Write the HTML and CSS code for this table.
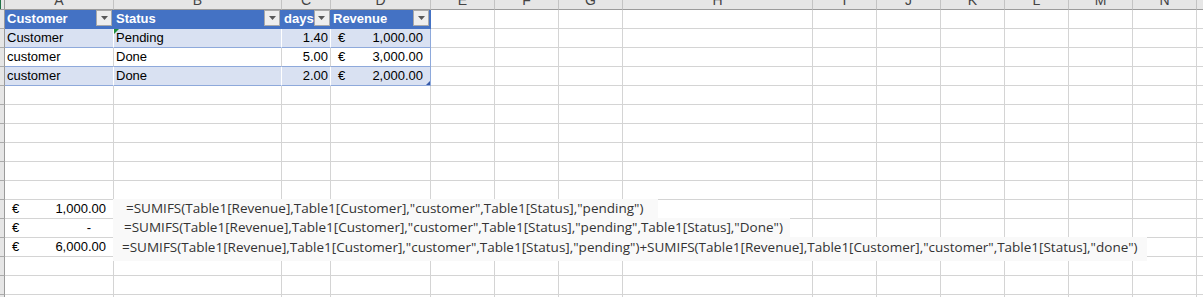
FILE: index.html
```html
<!DOCTYPE html>
<html lang="en">
<head>
<meta charset="utf-8">
<title>Sheet1</title>
<link rel="stylesheet" href="styles.css">
</head>
<body>
<div class="sheet">
  <div class="row cols">
    <div class="corner"></div><div>A</div><div>B</div><div>C</div><div>D</div><div>E</div><div>F</div><div>G</div><div>H</div><div>I</div><div>J</div><div>K</div><div>L</div><div>M</div><div>N</div><div>O</div>
  </div>
  <div class="row">
    <div class="rh"></div>
    <div class="th"><span>Customer</span><span class="fbtn"><svg width="7" height="4" viewBox="0 0 7 4"><path d="M0 0H7L3.5 4Z" fill="#595959"/></svg></span></div>
    <div class="th"><span>Status</span><span class="fbtn"><svg width="7" height="4" viewBox="0 0 7 4"><path d="M0 0H7L3.5 4Z" fill="#595959"/></svg></span></div>
    <div class="th"><span>days</span><span class="fbtn"><svg width="7" height="4" viewBox="0 0 7 4"><path d="M0 0H7L3.5 4Z" fill="#595959"/></svg></span></div>
    <div class="th"><span>Revenue</span><span class="fbtn"><svg width="7" height="4" viewBox="0 0 7 4"><path d="M0 0H7L3.5 4Z" fill="#595959"/></svg></span></div>
    <div></div><div></div><div></div><div></div><div></div><div></div><div></div><div></div><div></div><div></div><div></div>
  </div>
  <div class="row band">
    <div class="rh"></div>
    <div class="t">Customer</div>
    <div class="t err">Pending</div>
    <div class="t num">1.40</div>
    <div class="t acct last"><span>€</span><span>1,000.00</span></div>
    <div></div><div></div><div></div><div></div><div></div><div></div><div></div><div></div><div></div><div></div><div></div>
  </div>
  <div class="row plain">
    <div class="rh"></div>
    <div class="t">customer</div>
    <div class="t">Done</div>
    <div class="t num">5.00</div>
    <div class="t acct last"><span>€</span><span>3,000.00</span></div>
    <div></div><div></div><div></div><div></div><div></div><div></div><div></div><div></div><div></div><div></div><div></div>
  </div>
  <div class="row band">
    <div class="rh"></div>
    <div class="t">customer</div>
    <div class="t">Done</div>
    <div class="t num">2.00</div>
    <div class="t acct last handle"><span>€</span><span>2,000.00</span></div>
    <div></div><div></div><div></div><div></div><div></div><div></div><div></div><div></div><div></div><div></div><div></div>
  </div>
  <div class="row"><div class="rh"></div><div></div><div></div><div></div><div></div><div></div><div></div><div></div><div></div><div></div><div></div><div></div><div></div><div></div><div></div><div></div></div>
  <div class="row"><div class="rh"></div><div></div><div></div><div></div><div></div><div></div><div></div><div></div><div></div><div></div><div></div><div></div><div></div><div></div><div></div><div></div></div>
  <div class="row"><div class="rh"></div><div></div><div></div><div></div><div></div><div></div><div></div><div></div><div></div><div></div><div></div><div></div><div></div><div></div><div></div><div></div></div>
  <div class="row"><div class="rh"></div><div></div><div></div><div></div><div></div><div></div><div></div><div></div><div></div><div></div><div></div><div></div><div></div><div></div><div></div><div></div></div>
  <div class="row"><div class="rh"></div><div></div><div></div><div></div><div></div><div></div><div></div><div></div><div></div><div></div><div></div><div></div><div></div><div></div><div></div><div></div></div>
  <div class="row"><div class="rh"></div><div></div><div></div><div></div><div></div><div></div><div></div><div></div><div></div><div></div><div></div><div></div><div></div><div></div><div></div><div></div></div>
  <div class="row">
    <div class="rh"></div>
    <div class="acct"><span>€</span><span>1,000.00</span></div>
    <div></div><div></div><div></div><div></div><div></div><div></div><div></div><div></div><div></div><div></div><div></div><div></div><div></div><div></div>
  </div>
  <div class="row">
    <div class="rh"></div>
    <div class="acct"><span>€</span><span class="dash">-</span></div>
    <div></div><div></div><div></div><div></div><div></div><div></div><div></div><div></div><div></div><div></div><div></div><div></div><div></div><div></div>
  </div>
  <div class="row">
    <div class="rh"></div>
    <div class="acct"><span>€</span><span>6,000.00</span></div>
    <div></div><div></div><div></div><div></div><div></div><div></div><div></div><div></div><div></div><div></div><div></div><div></div><div></div><div></div>
  </div>
  <div class="row"><div class="rh"></div><div></div><div></div><div></div><div></div><div></div><div></div><div></div><div></div><div></div><div></div><div></div><div></div><div></div><div></div><div></div></div>
  <div class="row"><div class="rh"></div><div></div><div></div><div></div><div></div><div></div><div></div><div></div><div></div><div></div><div></div><div></div><div></div><div></div><div></div><div></div></div>
  <div class="row"><div class="rh"></div><div></div><div></div><div></div><div></div><div></div><div></div><div></div><div></div><div></div><div></div><div></div><div></div><div></div><div></div><div></div></div>

  <div class="pic pic1">=SUMIFS(Table1[Revenue],Table1[Customer],"customer",Table1[Status],"pending")</div>
  <div class="pic pic2">=SUMIFS(Table1[Revenue],Table1[Customer],"customer",Table1[Status],"pending",Table1[Status],"Done")</div>
  <div class="pic pic3">=SUMIFS(Table1[Revenue],Table1[Customer],"customer",Table1[Status],"pending")+SUMIFS(Table1[Revenue],Table1[Customer],"customer",Table1[Status],"done")</div>
</div>
</body>
</html>
```
FILE: styles.css
```css
* { box-sizing: border-box; }
html, body { margin: 0; padding: 0; background: #fff; overflow: hidden; }
body {
  width: 1203px;
  height: 297px;
  font-family: "Liberation Sans", Arial, sans-serif;
  font-size: 13px;
  color: #000;
}
.sheet { position: relative; width: 1261px; height: 297px; overflow: hidden; }

.row {
  display: grid;
  grid-template-columns: 5px 109px 168px 49px 100px 64px 64px 64px 190px 64px 64px 64px 64px 64px 64px 64px;
  height: 19px;
}
.row > div {
  border-right: 1px solid #d4d4d4;
  border-bottom: 1px solid #d4d4d4;
  line-height: 18px;
  white-space: nowrap;
  overflow: hidden;
  padding: 0 2px;
}
.row > .rh {
  background: #e6e6e6;
  border-right-color: #9b9b9b;
  border-bottom-color: #ababab;
  padding: 0;
}

/* column letters (only their lower half is in view) */
.cols { height: 10px; }
.cols > div {
  background: #e6e6e6;
  border-right-color: #c3c3c3;
  border-bottom-color: #9b9b9b;
  text-align: center;
  line-height: 0;
  font-size: 14px;
  color: #444;
}
.cols > .corner {
  border-right-color: #9b9b9b;
  box-shadow: inset 1px 0 #217346;
}

/* table header */
.row > .th {
  background: #4472c4;
  color: #fff;
  font-weight: bold;
  border-right-color: #4472c4;
  border-bottom-color: #4472c4;
  display: flex;
  justify-content: space-between;
  padding: 0 1px 0 2px;
}
.fbtn {
  align-self: flex-start;
  width: 16px;
  height: 16px;
  flex: none;
  background: #eeeeee;
  border: 1px solid #a9a9a9;
  display: flex;
  align-items: center;
  justify-content: center;
}
.fbtn svg { display: block; }

/* table body */
.band > .t {
  background: #d9e1f2;
  border-right-color: #ffffff;
  border-bottom-color: #8ea9db;
}
.plain > .t { border-bottom-color: #8ea9db; }
.row > .last { border-right-color: #8ea9db; }
.num { text-align: right; }
.row > .acct {
  display: flex;
  justify-content: space-between;
  padding: 0 7px 0 7px;
}
.dash { padding-right: 15px; }

.row > .err { position: relative; }
.err::before {
  content: "";
  position: absolute;
  left: 0;
  top: 0;
  border-top: 5px solid #1e8c3a;
  border-right: 5px solid transparent;
}
.row > .handle { position: relative; }
.handle::after {
  content: "";
  position: absolute;
  right: 0;
  bottom: 0;
  border-left: 4px solid transparent;
  border-bottom: 4px solid #3559a8;
}

/* pasted formula pictures */
.pic {
  position: absolute;
  background: #f9f9f9;
  font-family: "Open Sans", "Noto Sans", sans-serif;
  font-size: 13.5px;
  line-height: 18px;
  color: #333;
  white-space: nowrap;
}
.pic1 { left: 113px; top: 199px; width: 545px; height: 19px; padding-left: 13px; }
.pic2 { left: 113px; top: 218px; width: 677px; height: 19px; padding-left: 11px; }
.pic3 { left: 113px; top: 237px; width: 1034px; height: 24px; padding: 1px 0 0 9px; }
```
